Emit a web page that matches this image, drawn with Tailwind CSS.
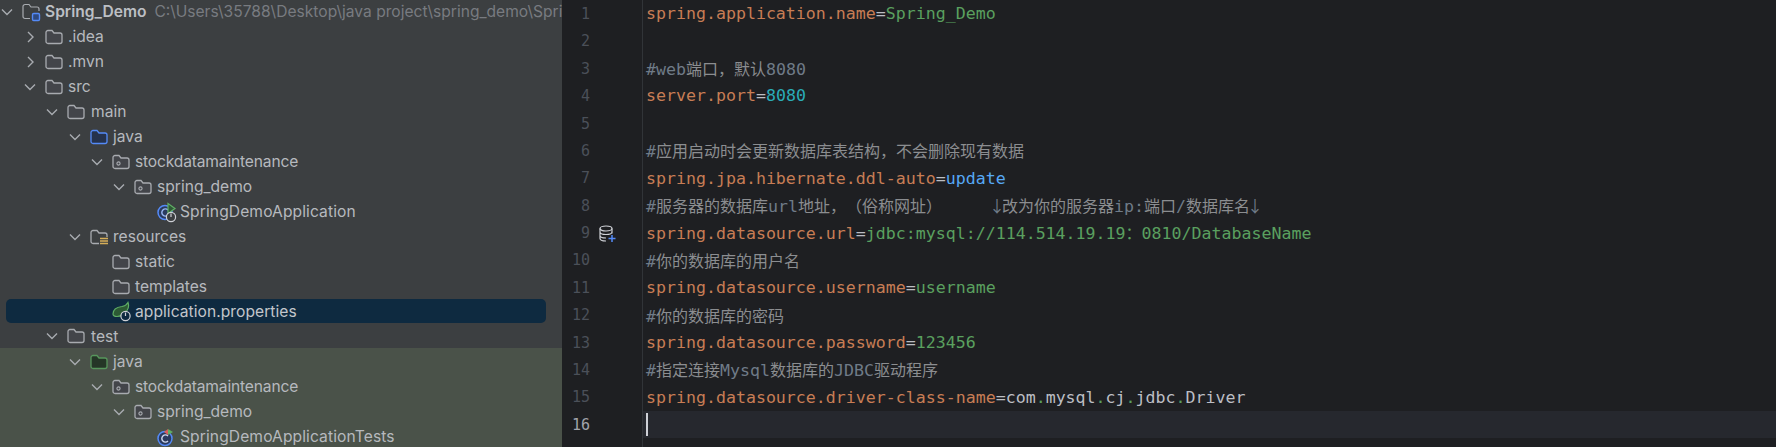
<!DOCTYPE html>
<html lang="en">
<head>
    <meta charset="UTF-8">
    <meta name="viewport" content="width=device-width, initial-scale=1.0">
    <title>Spring_Demo - application.properties</title>
    <script src="https://cdn.jsdelivr.net/npm/@tailwindcss/browser@4"></script>
</head>
<body class="w-[1776px] h-[447px] overflow-hidden bg-[#1e1f22]">
    <!-- shared icons -->
    <svg class="hidden">
        <symbol id="chev-down" viewBox="0 0 14 14"><path d="M2 4.5l5 5 5-5" fill="none" stroke="#a8abb0" stroke-width="1.4"/></symbol>
        <symbol id="chev-right" viewBox="0 0 14 14"><path d="M5 2l5 5-5 5" fill="none" stroke="#a8abb0" stroke-width="1.4"/></symbol>
        <symbol id="folder" viewBox="0 0 18 16"><path d="M3 1.5h4l2 2.5h6a2 2 0 0 1 2 2v6.5a2 2 0 0 1-2 2H3a2 2 0 0 1-2-2V3.5a2 2 0 0 1 2-2z" fill="#43454a" stroke="#a8abb0" stroke-width="1.3"/></symbol>
        <symbol id="folder-pkg" viewBox="0 0 18 16"><path d="M3 1.5h4l2 2.5h6a2 2 0 0 1 2 2v6.5a2 2 0 0 1-2 2H3a2 2 0 0 1-2-2V3.5a2 2 0 0 1 2-2z" fill="#43454a" stroke="#a8abb0" stroke-width="1.3"/><circle cx="6.5" cy="9.5" r="1.6" fill="none" stroke="#a8abb0" stroke-width="1.1"/></symbol>
    </svg>

    <div class="flex h-[447px]">
        <!-- project tree -->
        <aside class="w-[562px] h-[447px] shrink-0 flex flex-col overflow-hidden bg-[#3c3f41] font-['Inter',sans-serif] text-[15.6px] text-[#b6b9be]">
            <div class="-mt-[0.5px]">
                <div class="h-[25px] flex items-center whitespace-nowrap">
                    <svg class="w-[14px] h-[14px] shrink-0"><use href="#chev-down"/></svg>
                    <svg class="ml-[8px] w-[20px] h-[20px] shrink-0" viewBox="0 0 20 20">
                        <path d="M3 2.5h4l2 2.5h6a2 2 0 0 1 2 2v2M8 16.5H3a2 2 0 0 1-2-2V4.5a2 2 0 0 1 2-2" fill="none" stroke="#a8abb0" stroke-width="1.2"/>
                        <rect x="10.5" y="11.5" width="7" height="7" rx="1.2" fill="#2f4a80" stroke="#548af7" stroke-width="1.4"/>
                    </svg>
                    <span class="ml-[3px] font-semibold text-[#bcbfc4]">Spring_Demo</span>
                    <span class="ml-[8px] text-[#787b80]">C:\Users\35788\Desktop\java project\spring_demo\Spring_Demo</span>
                </div>
                <div class="h-[25px] flex items-center pl-[23px]">
                    <svg class="w-[14px] h-[14px]"><use href="#chev-right"/></svg>
                    <svg class="ml-[8px] w-[18px] h-[16px]"><use href="#folder"/></svg>
                    <span class="ml-[5px]">.idea</span>
                </div>
                <div class="h-[25px] flex items-center pl-[23px]">
                    <svg class="w-[14px] h-[14px]"><use href="#chev-right"/></svg>
                    <svg class="ml-[8px] w-[18px] h-[16px]"><use href="#folder"/></svg>
                    <span class="ml-[5px]">.mvn</span>
                </div>
                <div class="h-[25px] flex items-center pl-[23px]">
                    <svg class="w-[14px] h-[14px]"><use href="#chev-down"/></svg>
                    <svg class="ml-[8px] w-[18px] h-[16px]"><use href="#folder"/></svg>
                    <span class="ml-[5px]">src</span>
                </div>
                <div class="h-[25px] flex items-center pl-[45px]">
                    <svg class="w-[14px] h-[14px]"><use href="#chev-down"/></svg>
                    <svg class="ml-[8px] w-[18px] h-[16px]"><use href="#folder"/></svg>
                    <span class="ml-[6px]">main</span>
                </div>
                <div class="h-[25px] flex items-center pl-[68px]">
                    <svg class="w-[14px] h-[14px]"><use href="#chev-down"/></svg>
                    <svg class="ml-[8px] w-[18px] h-[16px]" viewBox="0 0 18 16"><path d="M3 1.5h4l2 2.5h6a2 2 0 0 1 2 2v6.5a2 2 0 0 1-2 2H3a2 2 0 0 1-2-2V3.5a2 2 0 0 1 2-2z" fill="#25324d" stroke="#548af7" stroke-width="1.3"/></svg>
                    <span class="ml-[5px]">java</span>
                </div>
                <div class="h-[25px] flex items-center pl-[90px]">
                    <svg class="w-[14px] h-[14px]"><use href="#chev-down"/></svg>
                    <svg class="ml-[8px] w-[18px] h-[16px]"><use href="#folder-pkg"/></svg>
                    <span class="ml-[5px] tracking-[-0.17px]">stockdatamaintenance</span>
                </div>
                <div class="h-[25px] flex items-center pl-[112px]">
                    <svg class="w-[14px] h-[14px]"><use href="#chev-down"/></svg>
                    <svg class="ml-[8px] w-[18px] h-[16px]"><use href="#folder-pkg"/></svg>
                    <span class="ml-[5px]">spring_demo</span>
                </div>
                <div class="h-[25px] flex items-center pl-[157px]">
                    <svg class="w-[20px] h-[21px]" viewBox="0 0 20 21">
                        <circle cx="8" cy="10.5" r="7" fill="#2a3a5e" stroke="#548af7" stroke-width="1.5"/>
                        <path d="M11 8a3.6 3.6 0 1 0 0 5" fill="none" stroke="#9ab8f5" stroke-width="1.4"/>
                        <path d="M11 1.5l7 5-7 5z" fill="#2f5a36" stroke="#5fad65" stroke-width="1.2"/>
                        <circle cx="14" cy="15" r="4.6" fill="#3c3f41" stroke="#ced0d6" stroke-width="1.2"/>
                        <path d="M14 11.5v3.5" stroke="#ced0d6" stroke-width="1.2"/>
                    </svg>
                    <span class="ml-[3px] tracking-[0.1px]">SpringDemoApplication</span>
                </div>
                <div class="h-[25px] flex items-center pl-[68px]">
                    <svg class="w-[14px] h-[14px]"><use href="#chev-down"/></svg>
                    <svg class="ml-[8px] w-[18px] h-[17px]" viewBox="0 0 18 17">
                        <path d="M9 14.5H3a2 2 0 0 1-2-2V3.5a2 2 0 0 1 2-2h4l2 2.5h6a2 2 0 0 1 2 2v2" fill="none" stroke="#a8abb0" stroke-width="1.3"/>
                        <path d="M10 9.5h8M10 12h8M10 14.5h8" stroke="#d6ae58" stroke-width="1.4"/>
                    </svg>
                    <span class="ml-[5px]">resources</span>
                </div>
                <div class="h-[25px] flex items-center pl-[112px]">
                    <svg class="w-[18px] h-[16px]"><use href="#folder"/></svg>
                    <span class="ml-[5px]">static</span>
                </div>
                <div class="h-[25px] flex items-center pl-[112px]">
                    <svg class="w-[18px] h-[16px]"><use href="#folder"/></svg>
                    <span class="ml-[5px]">templates</span>
                </div>
                <div class="h-[24px] -mt-[0.5px] mb-[1.5px] ml-[6px] w-[540px] rounded-[5px] flex items-center pl-[106px] bg-[#0e2a40]">
                    <svg class="w-[20px] h-[21px]" viewBox="0 0 20 21">
                        <path d="M1 13c0-5 5-7 9-7.500 3-.5 5-2 6-4 1 3 .5 6-1 8-1 3-6 6-10 6-2.500 0-4-1-4-2.500z" fill="#2c5a34" stroke="#5fad65" stroke-width="1.2"/>
                        <circle cx="13.500" cy="15" r="4.600" fill="#0e2a40" stroke="#ced0d6" stroke-width="1.200"/>
                        <path d="M13.500 11.500v3.500" stroke="#ced0d6" stroke-width="1.200"/>
                    </svg>
                    <span class="ml-[3px] pt-px tracking-[0.05px] text-[#c3c6cb]">application.properties</span>
                </div>
                <div class="h-[23.5px] flex items-center pl-[45px]">
                    <svg class="w-[14px] h-[14px]"><use href="#chev-down"/></svg>
                    <svg class="ml-[8px] w-[18px] h-[16px]"><use href="#folder"/></svg>
                    <span class="ml-[6px]">test</span>
                </div>
            </div>
            <div class="flex-1 pt-[1.5px] bg-[#4a5249]">
                <div class="h-[25px] flex items-center pl-[68px]">
                    <svg class="w-[14px] h-[14px]"><use href="#chev-down"/></svg>
                    <svg class="ml-[8px] w-[18px] h-[16px]" viewBox="0 0 18 16"><path d="M3 1.5h4l2 2.5h6a2 2 0 0 1 2 2v6.5a2 2 0 0 1-2 2H3a2 2 0 0 1-2-2V3.5a2 2 0 0 1 2-2z" fill="#253627" stroke="#57965c" stroke-width="1.3"/></svg>
                    <span class="ml-[5px]">java</span>
                </div>
                <div class="h-[25px] flex items-center pl-[90px]">
                    <svg class="w-[14px] h-[14px]"><use href="#chev-down"/></svg>
                    <svg class="ml-[8px] w-[18px] h-[16px]"><use href="#folder-pkg"/></svg>
                    <span class="ml-[5px] tracking-[-0.17px]">stockdatamaintenance</span>
                </div>
                <div class="h-[25px] flex items-center pl-[112px]">
                    <svg class="w-[14px] h-[14px]"><use href="#chev-down"/></svg>
                    <svg class="ml-[8px] w-[18px] h-[16px]"><use href="#folder-pkg"/></svg>
                    <span class="ml-[5px]">spring_demo</span>
                </div>
                <div class="h-[25px] flex items-center pl-[157px]">
                    <svg class="w-[20px] h-[21px]" viewBox="0 0 20 21">
                        <circle cx="8" cy="11.500" r="7" fill="#2a3a5e" stroke="#548af7" stroke-width="1.500"/>
                        <path d="M11 9a3.600 3.600 0 1 0 0 5" fill="none" stroke="#cfd8ee" stroke-width="1.400"/>
                        <path d="M11 2v6l-4-3z" fill="#db5c5c"/>
                        <path d="M11 2l5 3-5 3z" fill="#5fad65"/>
                    </svg>
                    <span class="ml-[3px] tracking-[0.1px]">SpringDemoApplicationTests</span>
                </div>
            </div>
        </aside>

        <!-- editor -->
        <main class="flex-1 h-[447px] flex flex-col overflow-hidden font-['DejaVu_Sans_Mono',monospace] text-[16.6px] text-[#bcbec4] whitespace-pre [text-spacing-trim:space-all]">
            <div class="h-[27.4px] flex items-center">
                <div class="w-[81px] h-full shrink-0 flex items-center pt-px border-r border-[#313438]"><span class="w-[28px] text-right text-[15px] text-[#4b5059]">1</span></div>
                <div class="pl-[3px] pt-[2px]"><span class="text-[#c77d55]">spring.application.name</span>=<span class="text-[#5aa05f]">Spring_Demo</span></div>
            </div>
            <div class="h-[27.4px] flex items-center">
                <div class="w-[81px] h-full shrink-0 flex items-center pt-px border-r border-[#313438]"><span class="w-[28px] text-right text-[15px] text-[#4b5059]">2</span></div>
            </div>
            <div class="h-[27.4px] flex items-center">
                <div class="w-[81px] h-full shrink-0 flex items-center pt-px border-r border-[#313438]"><span class="w-[28px] text-right text-[15px] text-[#4b5059]">3</span></div>
                <div class="pl-[3px] pt-[2px] text-[#6f7b88]">#web<span class="font-['Noto_Sans_CJK_SC',sans-serif] text-[16px] text-[#8b8d90]">端口，默认</span>8080</div>
            </div>
            <div class="h-[27.4px] flex items-center">
                <div class="w-[81px] h-full shrink-0 flex items-center pt-px border-r border-[#313438]"><span class="w-[28px] text-right text-[15px] text-[#4b5059]">4</span></div>
                <div class="pl-[3px] pt-[2px]"><span class="text-[#c77d55]">server.port</span>=<span class="text-[#2aacb8]">8080</span></div>
            </div>
            <div class="h-[27.4px] flex items-center">
                <div class="w-[81px] h-full shrink-0 flex items-center pt-px border-r border-[#313438]"><span class="w-[28px] text-right text-[15px] text-[#4b5059]">5</span></div>
            </div>
            <div class="h-[27.4px] flex items-center">
                <div class="w-[81px] h-full shrink-0 flex items-center pt-px border-r border-[#313438]"><span class="w-[28px] text-right text-[15px] text-[#4b5059]">6</span></div>
                <div class="pl-[3px] pt-[2px] text-[#6f7b88]">#<span class="font-['Noto_Sans_CJK_SC',sans-serif] text-[16px] text-[#8b8d90]">应用启动时会更新数据库表结构，不会删除现有数据</span></div>
            </div>
            <div class="h-[27.4px] flex items-center">
                <div class="w-[81px] h-full shrink-0 flex items-center pt-px border-r border-[#313438]"><span class="w-[28px] text-right text-[15px] text-[#4b5059]">7</span></div>
                <div class="pl-[3px] pt-[2px]"><span class="text-[#c77d55]">spring.jpa.hibernate.ddl-auto</span>=<span class="text-[#56a8f5]">update</span></div>
            </div>
            <div class="h-[27.4px] flex items-center">
                <div class="w-[81px] h-full shrink-0 flex items-center pt-px border-r border-[#313438]"><span class="w-[28px] text-right text-[15px] text-[#4b5059]">8</span></div>
                <div class="pl-[3px] pt-[2px] text-[#6f7b88]">#<span class="font-['Noto_Sans_CJK_SC',sans-serif] text-[16px] text-[#8b8d90]">服务器的数据库</span>url<span class="font-['Noto_Sans_CJK_SC',sans-serif] text-[16px] text-[#8b8d90]">地址，（俗称网址）</span>     <span class="-mx-[3px] font-['Noto_Sans_CJK_SC',sans-serif] text-[16px]">↓</span><span class="font-['Noto_Sans_CJK_SC',sans-serif] text-[16px] text-[#8b8d90]">改为你的服务器</span>ip:<span class="font-['Noto_Sans_CJK_SC',sans-serif] text-[16px] text-[#8b8d90]">端口</span>/<span class="font-['Noto_Sans_CJK_SC',sans-serif] text-[16px] text-[#8b8d90]">数据库名</span><span class="-mx-[3px] font-['Noto_Sans_CJK_SC',sans-serif] text-[16px]">↓</span></div>
            </div>
            <div class="h-[27.4px] flex items-center">
                <div class="w-[81px] h-full shrink-0 flex items-center pt-px border-r border-[#313438]">
                    <span class="w-[28px] text-right text-[15px] text-[#4b5059]">9</span>
                    <svg class="ml-[9px] w-[17px] h-[17px]" viewBox="0 0 17 17">
                        <ellipse cx="7" cy="3.500" rx="6" ry="2.500" fill="none" stroke="#ced0d6" stroke-width="1.200"/>
                        <path d="M1 3.500v10c0 1.400 2.700 2.500 6 2.500M13 3.500v5M1 7c0 1.400 2.700 2.500 6 2.500s6-1.100 6-2.500M1 10.500c0 1.400 2.700 2.500 6 2.500" fill="none" stroke="#ced0d6" stroke-width="1.200"/>
                        <path d="M9.500 13.500h7M13 10v7" stroke="#548af7" stroke-width="1.500"/>
                    </svg>
                </div>
                <div class="pl-[3px] pt-[2px]"><span class="text-[#c77d55]">spring.datasource.url</span>=<span class="text-[#5aa05f]">jdbc:mysql://114.514.19.19<span class="font-['Noto_Sans_CJK_SC',sans-serif] text-[16px]">：</span>0810/DatabaseName</span></div>
            </div>
            <div class="h-[27.4px] flex items-center">
                <div class="w-[81px] h-full shrink-0 flex items-center pt-px border-r border-[#313438]"><span class="w-[28px] text-right text-[15px] text-[#4b5059]">10</span></div>
                <div class="pl-[3px] pt-[2px] text-[#6f7b88]">#<span class="font-['Noto_Sans_CJK_SC',sans-serif] text-[16px] text-[#8b8d90]">你的数据库的用户名</span></div>
            </div>
            <div class="h-[27.4px] flex items-center">
                <div class="w-[81px] h-full shrink-0 flex items-center pt-px border-r border-[#313438]"><span class="w-[28px] text-right text-[15px] text-[#4b5059]">11</span></div>
                <div class="pl-[3px] pt-[2px]"><span class="text-[#c77d55]">spring.datasource.username</span>=<span class="text-[#5aa05f]">username</span></div>
            </div>
            <div class="h-[27.4px] flex items-center">
                <div class="w-[81px] h-full shrink-0 flex items-center pt-px border-r border-[#313438]"><span class="w-[28px] text-right text-[15px] text-[#4b5059]">12</span></div>
                <div class="pl-[3px] pt-[2px] text-[#6f7b88]">#<span class="font-['Noto_Sans_CJK_SC',sans-serif] text-[16px] text-[#8b8d90]">你的数据库的密码</span></div>
            </div>
            <div class="h-[27.4px] flex items-center">
                <div class="w-[81px] h-full shrink-0 flex items-center pt-px border-r border-[#313438]"><span class="w-[28px] text-right text-[15px] text-[#4b5059]">13</span></div>
                <div class="pl-[3px] pt-[2px]"><span class="text-[#c77d55]">spring.datasource.password</span>=<span class="text-[#5aa05f]">123456</span></div>
            </div>
            <div class="h-[27.4px] flex items-center">
                <div class="w-[81px] h-full shrink-0 flex items-center pt-px border-r border-[#313438]"><span class="w-[28px] text-right text-[15px] text-[#4b5059]">14</span></div>
                <div class="pl-[3px] pt-[2px] text-[#6f7b88]">#<span class="font-['Noto_Sans_CJK_SC',sans-serif] text-[16px] text-[#8b8d90]">指定连接</span>Mysql<span class="font-['Noto_Sans_CJK_SC',sans-serif] text-[16px] text-[#8b8d90]">数据库的</span>JDBC<span class="font-['Noto_Sans_CJK_SC',sans-serif] text-[16px] text-[#8b8d90]">驱动程序</span></div>
            </div>
            <div class="h-[27.4px] flex items-center">
                <div class="w-[81px] h-full shrink-0 flex items-center pt-px border-r border-[#313438]"><span class="w-[28px] text-right text-[15px] text-[#4b5059]">15</span></div>
                <div class="pl-[3px] pt-[2px]"><span class="text-[#c77d55]">spring.datasource.driver-class-name</span>=com<span class="text-[#5aa05f]">.</span>mysql<span class="text-[#5aa05f]">.</span>cj<span class="text-[#5aa05f]">.</span>jdbc<span class="text-[#5aa05f]">.</span>Driver</div>
            </div>
            <div class="h-[27.4px] flex items-center">
                <div class="w-[81px] h-full shrink-0 flex items-center pt-px border-r border-[#313438]"><span class="w-[28px] text-right text-[15px] text-[#a1a3ab]">16</span></div>
                <div class="flex-1 h-full flex items-center pl-[3px] bg-[#26282e]"><div class="w-[2px] h-[23px] bg-[#ced0d6]"></div></div>
            </div>
            <div class="flex-1 flex">
                <div class="w-[81px] shrink-0 border-r border-[#313438]"></div>
            </div>
        </main>
    </div>
</body>
</html>
